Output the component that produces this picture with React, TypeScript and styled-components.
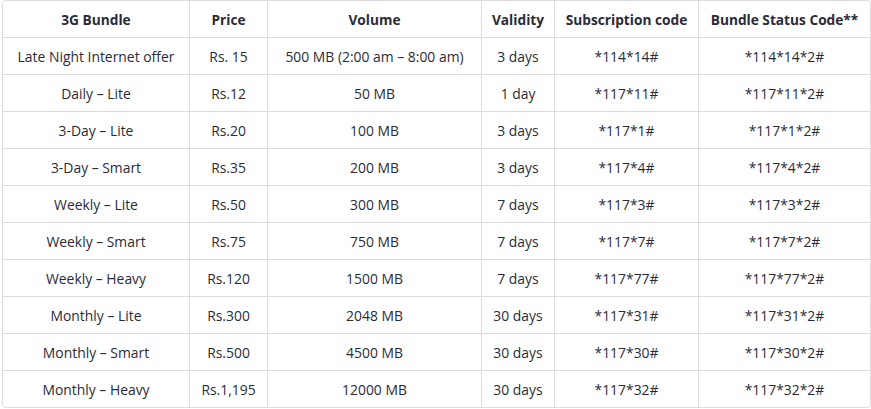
import styled, { createGlobalStyle } from 'styled-components'

const GlobalStyle = createGlobalStyle`
   html, body {
      margin: 0;
      padding: 0;
      background: #fff;
   }
`

const Wrapper = styled.div`
   padding: 0 0 0 2px;
   width: 869px;
`

const Table = styled.table`
   width: 869px;
   table-layout: fixed;
   border-collapse: separate;
   border-spacing: 0;
   border: 1px solid #dcdcdc;
   border-radius: 4px;
   font-family: 'Open Sans', 'Noto Sans', sans-serif;
   font-size: 13.9px;
   color: #2b2b38;
`

const Th = styled.th<{ $first?: boolean }>`
   height: 36px;
   padding: 0;
   font-weight: 700;
   font-size: 13.7px;
   text-align: center;
   border-bottom: 1px solid #dcdcdc;
   border-left: ${({ $first }) => ($first ? 'none' : '1px solid #dcdcdc')};
`

const Td = styled.td<{ $first?: boolean; $last?: boolean }>`
   height: 36px;
   padding: 0;
   text-align: center;
   white-space: nowrap;
   border-bottom: ${({ $last }) => ($last ? 'none' : '1px solid #dcdcdc')};
   border-left: ${({ $first }) => ($first ? 'none' : '1px solid #dcdcdc')};
`

const columns = [
   { title: '3G Bundle', width: 186 },
   { title: 'Price', width: 78 },
   { title: 'Volume', width: 214 },
   { title: 'Validity', width: 73 },
   { title: 'Subscription code', width: 144 },
   { title: 'Bundle Status Code**', width: 172 },
]

const rows = [
   ['Late Night Internet offer', 'Rs. 15', '500 MB (2:00 am – 8:00 am)', '3 days', '*114*14#', '*114*14*2#'],
   ['Daily – Lite', 'Rs.12', '50 MB', '1 day', '*117*11#', '*117*11*2#'],
   ['3-Day – Lite', 'Rs.20', '100 MB', '3 days', '*117*1#', '*117*1*2#'],
   ['3-Day – Smart', 'Rs.35', '200 MB', '3 days', '*117*4#', '*117*4*2#'],
   ['Weekly – Lite', 'Rs.50', '300 MB', '7 days', '*117*3#', '*117*3*2#'],
   ['Weekly – Smart', 'Rs.75', '750 MB', '7 days', '*117*7#', '*117*7*2#'],
   ['Weekly – Heavy', 'Rs.120', '1500 MB', '7 days', '*117*77#', '*117*77*2#'],
   ['Monthly – Lite', 'Rs.300', '2048 MB', '30 days', '*117*31#', '*117*31*2#'],
   ['Monthly – Smart', 'Rs.500', '4500 MB', '30 days', '*117*30#', '*117*30*2#'],
   ['Monthly – Heavy', 'Rs.1,195', '12000 MB', '30 days', '*117*32#', '*117*32*2#'],
]

export default function App() {
   return (
      <Wrapper>
         <GlobalStyle />
         <Table>
            <colgroup>
               {columns.map((c) => (
                  <col key={c.title} style={{ width: c.width }} />
               ))}
            </colgroup>
            <thead>
               <tr>
                  {columns.map((c, i) => (
                     <Th key={c.title} $first={i === 0}>{c.title}</Th>
                  ))}
               </tr>
            </thead>
            <tbody>
               {rows.map((r, ri) => (
                  <tr key={ri}>
                     {r.map((cell, ci) => (
                        <Td key={ci} $first={ci === 0} $last={ri === rows.length - 1}>{cell}</Td>
                     ))}
                  </tr>
               ))}
            </tbody>
         </Table>
      </Wrapper>
   )
}
